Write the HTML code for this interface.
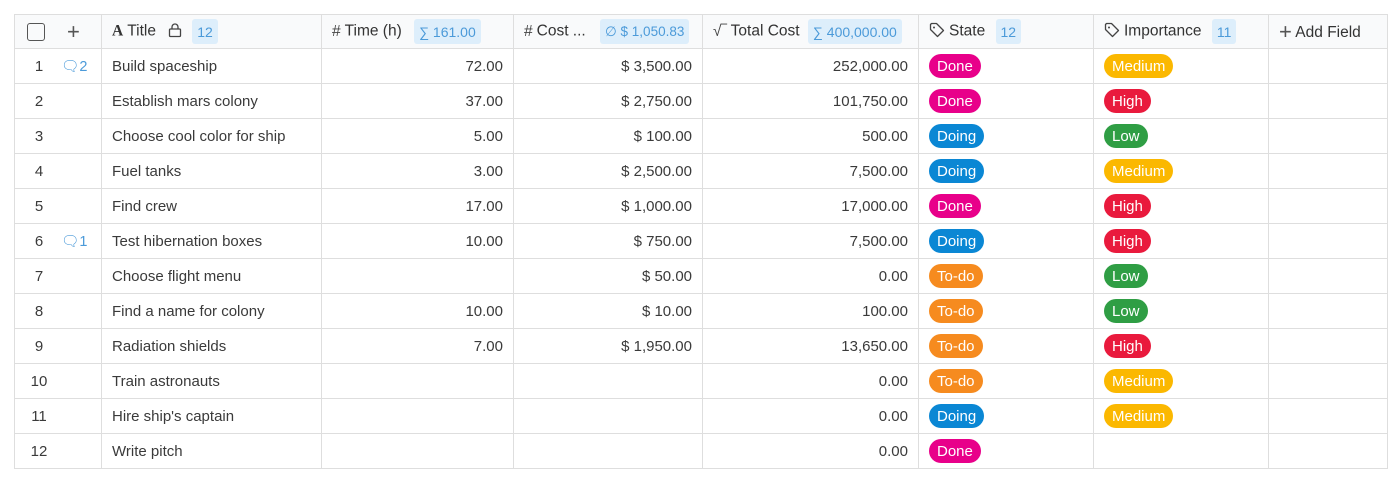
<!DOCTYPE html>
<html><head><meta charset="utf-8"><style>
body{margin:0;background:#fff;width:1400px;height:482px;overflow:hidden;font-family:"Liberation Sans",sans-serif;color:#3a3a3a;}
table{position:absolute;left:14px;top:14px;border-collapse:collapse;table-layout:fixed;width:1373px;font-size:15px;}
td,th{border:1px solid #dedede;padding:0 10px;white-space:nowrap;overflow:hidden;}
th{height:33px;background:#f9fafb;font-weight:normal;text-align:left;font-size:15.5px;color:#333;}
td{height:34px;}
.r{text-align:right;}
.pill{display:inline-block;background:#ddeefb;color:#4b9ad9;padding:0 5px;height:25px;line-height:26px;border-radius:3px;margin-left:6px;font-size:14px;vertical-align:middle}
.b{display:inline-flex;align-items:center;color:#fff;border-radius:12px;height:24px;padding:1px 8px 0;box-sizing:border-box;font-size:15px;vertical-align:middle}
.done{background:#e8008a}.doing{background:#0a87d4}.todo{background:#f68b1f}
.med{background:#fbb800}.high{background:#e91a3d}.low{background:#2f9e44}
.cm{color:#4b9ad9;font-size:14.5px;}
.ic{color:#444;margin-right:4px}
.n{padding-left:0;}
.n span.k{display:inline-block;width:48px;text-align:center}
</style></head><body>
<table>
<colgroup><col style="width:87px"><col style="width:220px"><col style="width:192px"><col style="width:189px"><col style="width:216px"><col style="width:175px"><col style="width:175px"><col style="width:119px"></colgroup>
<tr>
<th style="padding:0 0 0 12px"><span style="display:inline-block;width:16px;height:16px;border:1.5px solid #555;border-radius:3px;vertical-align:middle"></span><span style="display:inline-block;margin-left:22px;font-size:22px;color:#555;vertical-align:middle;font-weight:300">+</span></th>
<th><span style="font-family:'Liberation Serif',serif;font-weight:bold">A</span> Title <svg width="14" height="16" viewBox="0 0 14 16" style="vertical-align:-2px;margin-left:8px"><rect x="1.5" y="7" width="11" height="7.5" rx="1" fill="none" stroke="#444" stroke-width="1.3"/><path d="M4 7V5a3 3 0 0 1 6 0v2" fill="none" stroke="#444" stroke-width="1.3"/></svg><span class="pill" style="margin-left:10px">12</span></th>
<th><span class="ic">#</span>Time (h) <span class="pill" style="margin-left:8px">∑ 161.00</span></th>
<th><span class="ic">#</span>Cost ... <span class="pill" style="margin-left:10px;font-size:13.5px">∅ $ 1,050.83</span></th>
<th><span class="ic">√‾</span>Total Cost <span class="pill" style="margin-left:4px">∑ 400,000.00</span></th>
<th><svg width="16" height="16" viewBox="0 0 16 16" style="vertical-align:-2px;margin-right:4px"><path d="M1.5 2.5v5l7 7 6-6-7-7h-5z" fill="none" stroke="#444" stroke-width="1.3" stroke-linejoin="round"/><circle cx="5" cy="5.5" r="1" fill="#444"/></svg>State <span class="pill">12</span></th>
<th><svg width="16" height="16" viewBox="0 0 16 16" style="vertical-align:-2px;margin-right:4px"><path d="M1.5 2.5v5l7 7 6-6-7-7h-5z" fill="none" stroke="#444" stroke-width="1.3" stroke-linejoin="round"/><circle cx="5" cy="5.5" r="1" fill="#444"/></svg>Importance <span class="pill">11</span></th>
<th style="padding-left:10px"><span style="font-size:22px;font-weight:100;vertical-align:-2px;color:#555">+</span> Add Field</th>
</tr>
<tr><td class="n"><span class="k">1</span><span class="cm" style="margin-left:-2px">🗨2</span></td><td>Build spaceship</td><td class="r">72.00</td><td class="r">$ 3,500.00</td><td class="r">252,000.00</td><td><span class="b done">Done</span></td><td><span class="b med">Medium</span></td><td></td></tr>
<tr><td class="n"><span class="k">2</span></td><td>Establish mars colony</td><td class="r">37.00</td><td class="r">$ 2,750.00</td><td class="r">101,750.00</td><td><span class="b done">Done</span></td><td><span class="b high">High</span></td><td></td></tr>
<tr><td class="n"><span class="k">3</span></td><td>Choose cool color for ship</td><td class="r">5.00</td><td class="r">$ 100.00</td><td class="r">500.00</td><td><span class="b doing">Doing</span></td><td><span class="b low">Low</span></td><td></td></tr>
<tr><td class="n"><span class="k">4</span></td><td>Fuel tanks</td><td class="r">3.00</td><td class="r">$ 2,500.00</td><td class="r">7,500.00</td><td><span class="b doing">Doing</span></td><td><span class="b med">Medium</span></td><td></td></tr>
<tr><td class="n"><span class="k">5</span></td><td>Find crew</td><td class="r">17.00</td><td class="r">$ 1,000.00</td><td class="r">17,000.00</td><td><span class="b done">Done</span></td><td><span class="b high">High</span></td><td></td></tr>
<tr><td class="n"><span class="k">6</span><span class="cm" style="margin-left:-2px">🗨1</span></td><td>Test hibernation boxes</td><td class="r">10.00</td><td class="r">$ 750.00</td><td class="r">7,500.00</td><td><span class="b doing">Doing</span></td><td><span class="b high">High</span></td><td></td></tr>
<tr><td class="n"><span class="k">7</span></td><td>Choose flight menu</td><td class="r"></td><td class="r">$ 50.00</td><td class="r">0.00</td><td><span class="b todo">To-do</span></td><td><span class="b low">Low</span></td><td></td></tr>
<tr><td class="n"><span class="k">8</span></td><td>Find a name for colony</td><td class="r">10.00</td><td class="r">$ 10.00</td><td class="r">100.00</td><td><span class="b todo">To-do</span></td><td><span class="b low">Low</span></td><td></td></tr>
<tr><td class="n"><span class="k">9</span></td><td>Radiation shields</td><td class="r">7.00</td><td class="r">$ 1,950.00</td><td class="r">13,650.00</td><td><span class="b todo">To-do</span></td><td><span class="b high">High</span></td><td></td></tr>
<tr><td class="n"><span class="k">10</span></td><td>Train astronauts</td><td class="r"></td><td class="r"></td><td class="r">0.00</td><td><span class="b todo">To-do</span></td><td><span class="b med">Medium</span></td><td></td></tr>
<tr><td class="n"><span class="k">11</span></td><td>Hire ship's captain</td><td class="r"></td><td class="r"></td><td class="r">0.00</td><td><span class="b doing">Doing</span></td><td><span class="b med">Medium</span></td><td></td></tr>
<tr><td class="n"><span class="k">12</span></td><td>Write pitch</td><td class="r"></td><td class="r"></td><td class="r">0.00</td><td><span class="b done">Done</span></td><td></td><td></td></tr>
</table>
</body></html>
